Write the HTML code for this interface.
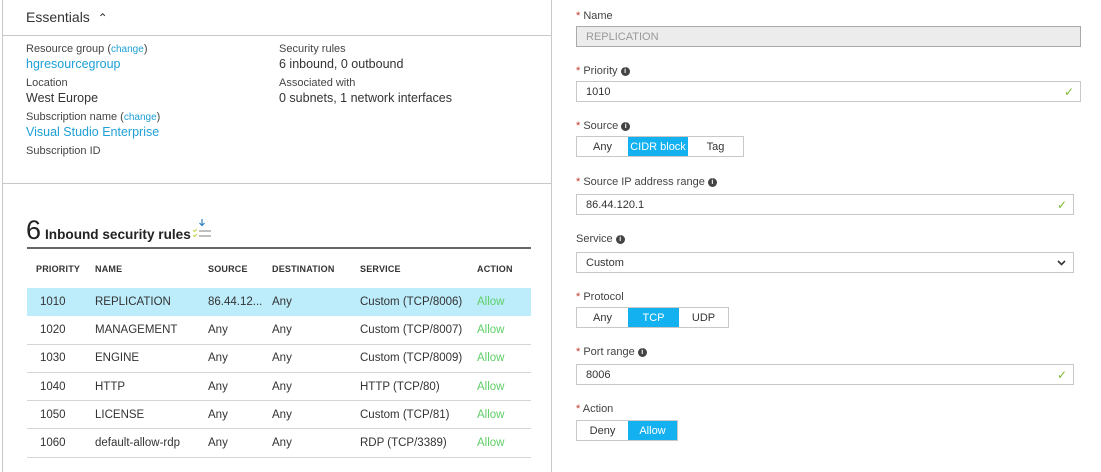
<!DOCTYPE html>
<html><head><meta charset="utf-8"><style>
*{margin:0;padding:0;box-sizing:border-box}
body{width:1101px;height:472px;background:#fff;position:relative;overflow:hidden;font-family:"Liberation Sans",sans-serif;color:#333}
.a{position:absolute;white-space:nowrap}
.lbl{font-size:11px;color:#444}
.val{font-size:12.5px;color:#333}
.link{color:#1ea0d6}
.sm{font-size:10px}
.star{color:#c0392b}
.info{display:inline-block;width:9px;height:9px;border-radius:50%;background:#444;color:#fff;font-size:7px;line-height:9px;text-align:center;font-weight:bold;vertical-align:1px;margin-left:3px}
.inp{position:absolute;border:1px solid #c8c8c8;height:21px;font-size:11px;padding-left:9px;line-height:21px;color:#333}
.chk{position:absolute;right:6px;top:0;color:#7cb82f;font-size:12px}
.seg{position:absolute;height:21px;display:flex;border:1px solid #c8c8c8}
.seg div{font-size:11px;text-align:center;line-height:21px;color:#333}
.seg .on{background:#14b1f0;color:#fff}
.th{font-size:9px;font-weight:bold;color:#333;top:264px;letter-spacing:.2px}
.td{font-size:11.5px;color:#333}
.al{color:#5fd068}
.hr{position:absolute;left:27px;width:504px;height:1px;background:#d5d5d5}
</style></head><body>
<div class="a" style="left:2px;top:0;width:1px;height:472px;background:#c8c8c8"></div>
<div class="a" style="left:551px;top:0;width:1px;height:472px;background:#c8c8c8"></div>
<div class="a" style="left:3px;top:35px;width:548px;height:1px;background:#c8c8c8"></div>
<div class="a" style="left:3px;top:183px;width:548px;height:1px;background:#c8c8c8"></div>

<div class="a" style="left:26px;top:9px;font-size:14px;color:#333">Essentials &nbsp;<span style="font-size:12px">&#8963;</span></div>

<div class="a lbl" style="left:26px;top:43px">Resource group (<span class="link sm">change</span>)</div>
<div class="a val link" style="left:26px;top:57px">hgresourcegroup</div>
<div class="a lbl" style="left:26px;top:77px">Location</div>
<div class="a val" style="left:26px;top:91px">West Europe</div>
<div class="a lbl" style="left:26px;top:111px">Subscription name (<span class="link sm">change</span>)</div>
<div class="a val link" style="left:26px;top:125px">Visual Studio Enterprise</div>
<div class="a lbl" style="left:26px;top:145px">Subscription ID</div>
<div class="a lbl" style="left:279px;top:43px">Security rules</div>
<div class="a val" style="left:279px;top:57px">6 inbound, 0 outbound</div>
<div class="a lbl" style="left:279px;top:77px">Associated with</div>
<div class="a val" style="left:279px;top:91px">0 subnets, 1 network interfaces</div>

<div class="a" style="left:26px;top:215px;font-size:27px;color:#222;line-height:30px">6</div>
<div class="a" style="left:45px;top:227px;font-size:13.6px;font-weight:bold;color:#222">Inbound security rules</div>
<svg class="a" style="left:191px;top:218px" width="22" height="22" viewBox="0 0 22 22">
<path d="M11 1v6M8.5 5l2.5 2.5L13.5 5" stroke="#2f7fc1" stroke-width="1.2" fill="none"/>
<path d="M2 12l1.5 1.5L6 11M2 17l1.5 1.5L6 16" stroke="#c8d44a" stroke-width="1" fill="none"/>
<path d="M8 13h12M8 18h12" stroke="#999" stroke-width="1.3"/>
</svg>
<div class="a" style="left:27px;top:247px;width:504px;height:2px;background:#666"></div>

<div class="a th" style="left:36px">PRIORITY</div>
<div class="a th" style="left:95px">NAME</div>
<div class="a th" style="left:208px">SOURCE</div>
<div class="a th" style="left:272px">DESTINATION</div>
<div class="a th" style="left:360px">SERVICE</div>
<div class="a th" style="left:477px">ACTION</div>

<div class="a" style="left:27px;top:288px;width:504px;height:28px;background:#bdecfb"></div>
<div class="hr" style="top:344px"></div><div class="hr" style="top:372px"></div><div class="hr" style="top:400px"></div><div class="hr" style="top:428px"></div><div class="hr" style="top:457px"></div>

<div class="a td" style="left:40px;top:296px">1010</div><div class="a td" style="left:95px;top:296px">REPLICATION</div><div class="a td" style="left:208px;top:296px">86.44.12...</div><div class="a td" style="left:272px;top:296px">Any</div><div class="a td" style="left:360px;top:296px">Custom (TCP/8006)</div><div class="a td al" style="left:477px;top:296px">Allow</div>
<div class="a td" style="left:40px;top:324px">1020</div><div class="a td" style="left:95px;top:324px">MANAGEMENT</div><div class="a td" style="left:208px;top:324px">Any</div><div class="a td" style="left:272px;top:324px">Any</div><div class="a td" style="left:360px;top:324px">Custom (TCP/8007)</div><div class="a td al" style="left:477px;top:324px">Allow</div>
<div class="a td" style="left:40px;top:352px">1030</div><div class="a td" style="left:95px;top:352px">ENGINE</div><div class="a td" style="left:208px;top:352px">Any</div><div class="a td" style="left:272px;top:352px">Any</div><div class="a td" style="left:360px;top:352px">Custom (TCP/8009)</div><div class="a td al" style="left:477px;top:352px">Allow</div>
<div class="a td" style="left:40px;top:381px">1040</div><div class="a td" style="left:95px;top:381px">HTTP</div><div class="a td" style="left:208px;top:381px">Any</div><div class="a td" style="left:272px;top:381px">Any</div><div class="a td" style="left:360px;top:381px">HTTP (TCP/80)</div><div class="a td al" style="left:477px;top:381px">Allow</div>
<div class="a td" style="left:40px;top:409px">1050</div><div class="a td" style="left:95px;top:409px">LICENSE</div><div class="a td" style="left:208px;top:409px">Any</div><div class="a td" style="left:272px;top:409px">Any</div><div class="a td" style="left:360px;top:409px">Custom (TCP/81)</div><div class="a td al" style="left:477px;top:409px">Allow</div>
<div class="a td" style="left:40px;top:437px">1060</div><div class="a td" style="left:95px;top:437px">default-allow-rdp</div><div class="a td" style="left:208px;top:437px">Any</div><div class="a td" style="left:272px;top:437px">Any</div><div class="a td" style="left:360px;top:437px">RDP (TCP/3389)</div><div class="a td al" style="left:477px;top:437px">Allow</div>

<!-- right panel -->
<div class="a lbl" style="left:576px;top:10px"><span class="star">*</span> Name</div>
<div class="inp" style="left:576px;top:26px;width:505px;background:#ececec;color:#999;border-color:#aaa">REPLICATION</div>
<div class="a lbl" style="left:576px;top:65px"><span class="star">*</span> Priority<span class="info">i</span></div>
<div class="inp" style="left:576px;top:81px;width:505px">1010<span class="chk">&#10003;</span></div>
<div class="a lbl" style="left:576px;top:120px"><span class="star">*</span> Source<span class="info">i</span></div>
<div class="seg" style="left:576px;top:136px"><div style="width:51px">Any</div><div class="on" style="width:60px">CIDR block</div><div style="width:55px">Tag</div></div>
<div class="a lbl" style="left:576px;top:176px"><span class="star">*</span> Source IP address range<span class="info">i</span></div>
<div class="inp" style="left:576px;top:194px;width:498px">86.44.120.1<span class="chk">&#10003;</span></div>
<div class="a lbl" style="left:576px;top:233px">Service<span class="info">i</span></div>
<div class="inp" style="left:576px;top:252px;width:498px">Custom<svg style="position:absolute;right:7px;top:7px" width="9" height="6" viewBox="0 0 9 6"><path d="M1 1l3.5 3.5L8 1" stroke="#333" stroke-width="1.6" fill="none"/></svg></div>
<div class="a lbl" style="left:576px;top:291px"><span class="star">*</span> Protocol</div>
<div class="seg" style="left:576px;top:307px"><div style="width:51px">Any</div><div class="on" style="width:51px">TCP</div><div style="width:49px">UDP</div></div>
<div class="a lbl" style="left:576px;top:346px"><span class="star">*</span> Port range<span class="info">i</span></div>
<div class="inp" style="left:576px;top:364px;width:498px">8006<span class="chk">&#10003;</span></div>
<div class="a lbl" style="left:576px;top:403px"><span class="star">*</span> Action</div>
<div class="seg" style="left:576px;top:420px"><div style="width:51px">Deny</div><div class="on" style="width:49px">Allow</div></div>
</body></html>
